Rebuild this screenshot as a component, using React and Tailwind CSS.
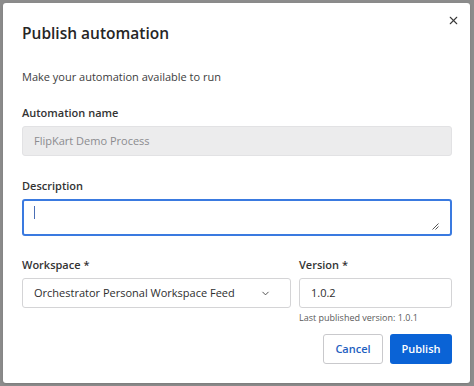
import { X, ChevronDown } from "lucide-react";

export default function App() {
  return (
    <div
      className="w-[474px] h-[386px] bg-[#8c8c8c] pt-[3px] pl-[3px]"
      style={{ fontFamily: '"Open Sans", "Noto Sans", sans-serif' }}
    >
      <div className="relative h-[380px] w-[467px] bg-white rounded-[3px] pl-[19px] pr-[18px] pt-[20px] shadow">
        <button className="absolute right-[10px] top-[11px] text-[#3a3a3a]">
          <X size={13} strokeWidth={2} />
        </button>
        <h1 className="text-[15.5px] leading-[20px] font-semibold text-[#262626]">Publish automation</h1>

        <p className="mt-[26px] text-[11px] leading-[16px] text-[#3d3d3d]">
          Make your automation available to run
        </p>

        <label className="block mt-[21px] text-[11px] leading-[14px] font-semibold text-[#333]">
          Automation name
        </label>
        <div className="mt-[6px] h-[30px] rounded-[3px] bg-[#ececed] border border-[#e2e2e4] flex items-center px-[11px] text-[11px] text-[#8b8b8f]">
          FlipKart Demo Process
        </div>

        <label className="block mt-[23px] text-[11px] leading-[14px] font-semibold text-[#333]">
          Description
        </label>
        <div className="relative mt-[6px] h-[37px] rounded-[3px] border-2 border-[#3a7ae0] bg-white">
          <div className="absolute left-[10px] top-[5px] w-[1px] h-[13px] bg-[#4a6fb5]" />
          <svg className="absolute right-[11px] bottom-[4px]" width="7" height="7" viewBox="0 0 7 7">
            <path d="M6.5 0.5L0.5 6.5M6.5 3.5L3.5 6.5" stroke="#555" strokeWidth="1" />
          </svg>
        </div>

        <div className="mt-[22px] flex gap-[8px]">
          <div className="w-[269px]">
            <label className="block text-[11px] leading-[14px] font-semibold text-[#333]">
              Workspace *
            </label>
            <div className="mt-[6px] h-[30px] rounded-[3px] border border-[#d4d4d6] flex items-center justify-between pl-[11px] pr-[19px] text-[11px] text-[#2e2e2e] whitespace-nowrap">
              <span>Orchestrator Personal Workspace Feed</span>
              <ChevronDown size={11} strokeWidth={2} className="text-[#444]" />
            </div>
          </div>
          <div className="flex-1">
            <label className="block text-[11px] leading-[14px] font-semibold text-[#333]">
              Version *
            </label>
            <div className="mt-[6px] h-[30px] rounded-[3px] border border-[#d4d4d6] flex items-center px-[11px] text-[11px] text-[#2e2e2e]">
              1.0.2
            </div>
            <p className="mt-[4px] text-[9px] leading-[12px] text-[#5a5a5a] whitespace-nowrap">
              Last published version: 1.0.1
            </p>
          </div>
        </div>

        <div className="mt-[10px] flex justify-end gap-[7px]">
          <button className="w-[60px] h-[30px] rounded-[3px] border border-[#c9c9cc] text-[11px] font-semibold text-[#1f5fbf] bg-white">
            Cancel
          </button>
          <button className="w-[62px] h-[30px] rounded-[3px] bg-[#0a63d6] text-[11px] font-semibold text-white">
            Publish
          </button>
        </div>
      </div>
    </div>
  );
}
